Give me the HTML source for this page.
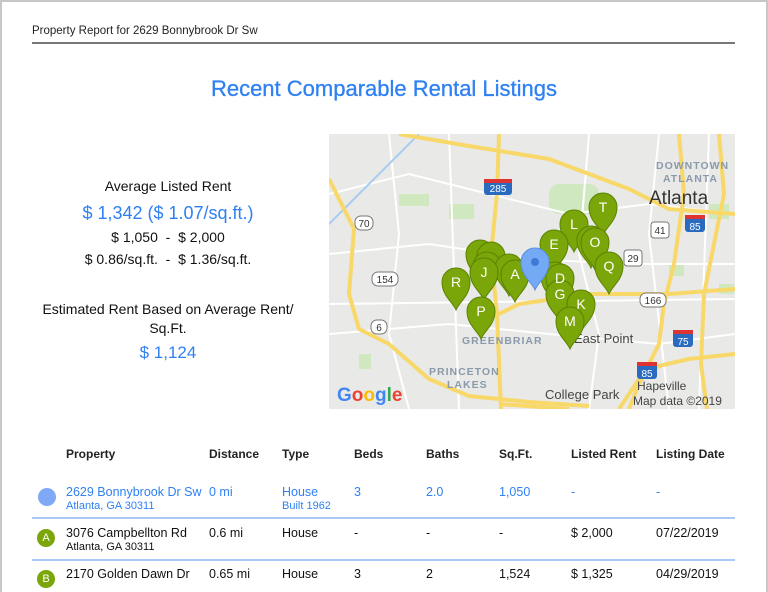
<!DOCTYPE html>
<html><head><meta charset="utf-8"><style>
body{margin:0;width:768px;height:582px;overflow:hidden;background:#fff;font-family:"Liberation Sans",Arial,sans-serif;position:relative}
.frame{position:absolute;left:0;top:0;width:764px;height:590px;border:2px solid #c8c8c8;border-bottom:none}
.a{position:absolute;white-space:nowrap}
.c{text-align:center;width:300px;left:18px}
.th{font-size:12px;font-weight:bold;color:#222;top:447px}
.td{font-size:12.5px;color:#111}
.sm{font-size:11px;color:#111}
.blue{color:#2f80f3 !important}
.dot{position:absolute;width:18px;height:18px;border-radius:50%;background:#7aa60a;color:#fff;font-size:11px;text-align:center;line-height:18px}
</style></head><body>
<div class="frame"></div>
<div class="a" style="left:32px;top:25px;font-size:11.5px;color:#222;font-weight:500">Property Report for 2629 Bonnybrook Dr Sw</div>
<div class="a" style="left:32px;top:42px;width:703px;height:2px;background:#777"></div>
<div class="a blue" style="left:0;width:768px;text-align:center;top:76px;font-size:22px;-webkit-text-stroke:0.3px #2f80f3">Recent Comparable Rental Listings</div>

<div class="a c" style="top:178px;font-size:14px;color:#111">Average Listed Rent</div>
<div class="a c blue" style="top:203px;font-size:18px">$ 1,342 ($ 1.07/sq.ft.)</div>
<div class="a c" style="top:229px;font-size:14px;color:#111">$ 1,050 &nbsp;- &nbsp;$ 2,000</div>
<div class="a c" style="top:251px;font-size:14px;color:#111">$ 0.86/sq.ft. &nbsp;- &nbsp;$ 1.36/sq.ft.</div>
<div class="a" style="left:33px;width:270px;text-align:center;top:300px;font-size:14px;color:#111;white-space:normal;line-height:19px">Estimated Rent Based on Average Rent/ Sq.Ft.</div>
<div class="a c blue" style="top:343px;font-size:17px">$ 1,124</div>

<svg class="a" style="left:329px;top:134px" width="406" height="275" viewBox="0 0 406 275">
<rect width="406" height="275" fill="#e9e9e7"/>
<g fill="#cfe8c0"><rect x="70" y="60" width="30" height="12"/><rect x="120" y="70" width="25" height="15"/><rect x="220" y="50" width="50" height="30" rx="10"/><rect x="340" y="130" width="15" height="12"/><rect x="380" y="70" width="20" height="15"/><rect x="390" y="150" width="15" height="10"/><rect x="30" y="220" width="12" height="15"/></g>
<g fill="none" stroke="#fff" stroke-width="2">
<path d="M0,60 L80,40 L160,60 L240,80 L320,70 L406,80"/><path d="M0,120 L100,110 L200,125 L300,130 L406,130"/>
<path d="M0,200 L120,190 L220,200 L330,210 L406,200"/><path d="M60,0 L70,100 L60,200 L80,275"/>
<path d="M260,0 L250,120 L270,200 L260,275"/><path d="M330,0 L320,100 L340,275"/><path d="M0,170 L406,165"/>
<path d="M120,0 L130,275"/><path d="M380,0 L370,275"/></g>
<path d="M0,90 L30,60 L60,30 L90,0" stroke="#a9cdf0" stroke-width="2" fill="none"/>
<g fill="none" stroke="#f8d869" stroke-width="4">
<path d="M70,0 L140,12 L220,25 L300,55 L340,75 L406,80"/>
<path d="M170,0 L168,60 L162,120 L168,180 L172,275"/>
<path d="M0,45 L25,95 L20,160 L30,195 L60,210 L100,245 L140,262 L200,268 L260,272"/>
<path d="M160,185 L190,170 L260,160 L340,160 L406,155"/>
<path d="M350,0 L355,60 L345,130 L335,170 L330,210 L310,250 L300,275"/>
<path d="M390,0 L395,60 L385,110 L375,160 L372,230 L378,275"/>
<path d="M290,275 L310,245 L330,232 L360,225 L406,220"/>
<path d="M170,270 L240,275"/></g>
<g font-family="Liberation Sans,Arial,sans-serif">
<rect x="155" y="45" width="28" height="16" rx="3" fill="#2a6bbf"/><rect x="155" y="45" width="28" height="4" fill="#d33"/><text x="169" y="58" font-size="10" fill="#fff" text-anchor="middle">285</text>
<rect x="356" y="81" width="20" height="17" rx="3" fill="#2a6bbf"/><rect x="356" y="81" width="20" height="4" fill="#d33"/><text x="366" y="96" font-size="10" fill="#fff" text-anchor="middle">85</text>
<rect x="344" y="196" width="20" height="17" rx="3" fill="#2a6bbf"/><rect x="344" y="196" width="20" height="4" fill="#d33"/><text x="354" y="211" font-size="10" fill="#fff" text-anchor="middle">75</text>
<rect x="308" y="228" width="20" height="17" rx="3" fill="#2a6bbf"/><rect x="308" y="228" width="20" height="4" fill="#d33"/><text x="318" y="243" font-size="10" fill="#fff" text-anchor="middle">85</text>
<g fill="#fff" stroke="#777" stroke-width="1"><rect x="26" y="82" width="18" height="14" rx="6"/><rect x="43" y="138" width="26" height="14" rx="6"/><rect x="42" y="186" width="16" height="14" rx="6"/><rect x="311" y="159" width="26" height="14" rx="6"/><rect x="322" y="88" width="18" height="16" rx="3"/><rect x="295" y="116" width="18" height="16" rx="3"/></g>
<g font-size="10" fill="#333" text-anchor="middle"><text x="35" y="93">70</text><text x="56" y="149">154</text><text x="50" y="197">6</text><text x="324" y="170">166</text><text x="331" y="100">41</text><text x="304" y="128">29</text></g>
<g fill="#8a9aab" font-size="10.5" font-weight="bold" letter-spacing="1"><text x="327" y="35">DOWNTOWN</text><text x="334" y="48">ATLANTA</text><text x="133" y="210">GREENBRIAR</text><text x="100" y="241">PRINCETON</text><text x="118" y="254">LAKES</text></g>
<text x="320" y="70" font-size="19" fill="#333">Atlanta</text>
<text x="245" y="209" font-size="13" fill="#444">East Point</text>
<text x="216" y="265" font-size="13" fill="#444">College Park</text>
<text x="308" y="256" font-size="12" fill="#444">Hapeville</text>
<text x="304" y="271" font-size="12" fill="#444">Map data ©2019</text>
<text x="8" y="267" font-size="19" font-weight="bold"><tspan fill="#4285f4">G</tspan><tspan fill="#ea4335">o</tspan><tspan fill="#fbbc05">o</tspan><tspan fill="#4285f4">g</tspan><tspan fill="#34a853">l</tspan><tspan fill="#ea4335">e</tspan></text>
</g>
<defs><path id="pin" d="M0,28 C-3,20 -14,14 -14,0 A14,14 0 1 1 14,0 C14,14 3,20 0,28Z"/></defs>
<g fill="#7aa60a" stroke="#5b8200" stroke-width="1" font-family="Liberation Sans,Arial,sans-serif">
<use href="#pin" x="151" y="120"/><use href="#pin" x="162" y="122"/><use href="#pin" x="158" y="132"/><use href="#pin" x="180" y="134"/>
<use href="#pin" x="274" y="73"/><use href="#pin" x="245" y="90"/><use href="#pin" x="262" y="106"/><use href="#pin" x="266" y="108"/><use href="#pin" x="225" y="110"/><use href="#pin" x="280" y="132"/>
<use href="#pin" x="226" y="142"/><use href="#pin" x="231" y="144"/><use href="#pin" x="186" y="140"/><use href="#pin" x="155" y="138"/><use href="#pin" x="127" y="148"/>
<use href="#pin" x="231" y="160"/><use href="#pin" x="252" y="170"/><use href="#pin" x="241" y="187"/><use href="#pin" x="152" y="177"/>
</g>
<use href="#pin" x="206" y="128" fill="#73a9f5" stroke="#5a90e0"/><circle cx="206" cy="128" r="4" fill="#3f7ad4"/>
<g fill="#fff" font-size="14" text-anchor="middle" font-family="Liberation Sans,Arial,sans-serif">
<text x="274" y="78">T</text><text x="245" y="95">L</text><text x="266" y="113">O</text><text x="225" y="115">E</text><text x="280" y="137">Q</text>
<text x="231" y="149">D</text><text x="186" y="145">A</text><text x="155" y="143">J</text><text x="127" y="153">R</text>
<text x="231" y="165">G</text><text x="252" y="175">K</text><text x="241" y="192">M</text><text x="152" y="182">P</text></g>
</svg>

<div class="a th" style="left:66px">Property</div><div class="a th" style="left:209px">Distance</div><div class="a th" style="left:282px">Type</div><div class="a th" style="left:354px">Beds</div><div class="a th" style="left:426px">Baths</div><div class="a th" style="left:499px">Sq.Ft.</div><div class="a th" style="left:571px">Listed Rent</div><div class="a th" style="left:656px">Listing Date</div>

<div class="dot" style="left:38px;top:488px;background:#7fa9f6"></div>
<div class="a td blue" style="left:66px;top:485px">2629 Bonnybrook Dr Sw</div><div class="a sm blue" style="left:66px;top:500px">Atlanta, GA 30311</div>
<div class="a td blue" style="left:209px;top:485px">0 mi</div><div class="a td blue" style="left:282px;top:485px">House</div><div class="a sm blue" style="left:282px;top:500px">Built 1962</div>
<div class="a td blue" style="left:354px;top:485px">3</div><div class="a td blue" style="left:426px;top:485px">2.0</div><div class="a td blue" style="left:499px;top:485px">1,050</div><div class="a td blue" style="left:571px;top:485px">-</div><div class="a td blue" style="left:656px;top:485px">-</div>
<div class="a" style="left:32px;top:517px;width:703px;height:2px;background:#a9c9f6"></div>

<div class="dot" style="left:37px;top:529px">A</div>
<div class="a td" style="left:66px;top:526px">3076 Campbellton Rd</div><div class="a sm" style="left:66px;top:541px">Atlanta, GA 30311</div>
<div class="a td" style="left:209px;top:526px">0.6 mi</div><div class="a td" style="left:282px;top:526px">House</div><div class="a td" style="left:354px;top:526px">-</div><div class="a td" style="left:426px;top:526px">-</div><div class="a td" style="left:499px;top:526px">-</div><div class="a td" style="left:571px;top:526px">$ 2,000</div><div class="a td" style="left:656px;top:526px">07/22/2019</div>
<div class="a" style="left:32px;top:559px;width:703px;height:2px;background:#a9c9f6"></div>

<div class="dot" style="left:37px;top:570px">B</div>
<div class="a td" style="left:66px;top:567px">2170 Golden Dawn Dr</div>
<div class="a td" style="left:209px;top:567px">0.65 mi</div><div class="a td" style="left:282px;top:567px">House</div><div class="a td" style="left:354px;top:567px">3</div><div class="a td" style="left:426px;top:567px">2</div><div class="a td" style="left:499px;top:567px">1,524</div><div class="a td" style="left:571px;top:567px">$ 1,325</div><div class="a td" style="left:656px;top:567px">04/29/2019</div>
</body></html>
